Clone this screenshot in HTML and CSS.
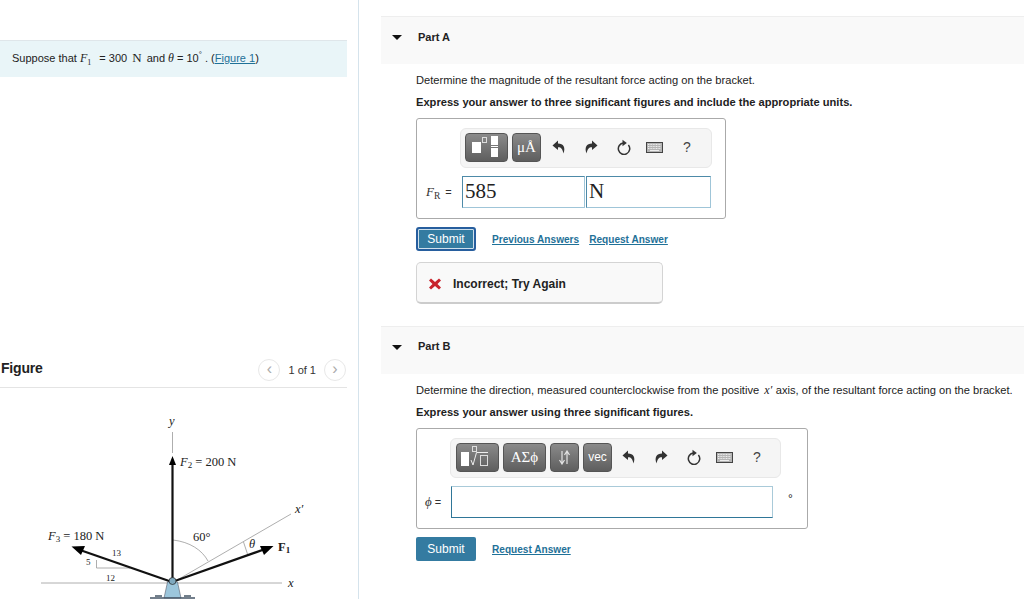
FILE: index.html
```html
<!DOCTYPE html>
<html lang="en">
<head>
<meta charset="utf-8">
<title>Part A and Part B</title>
<link rel="stylesheet" href="styles.css">
</head>
<body>
<svg class="defs" width="0" height="0" aria-hidden="true">
  <defs>
    <symbol id="undo" viewBox="0 0 14 14"><path d="M6 0.500 0.500 5.500 6 10V7.200C8.800 7 10.500 8.700 11.500 13.500 13.800 7.500 11.500 3.600 6 3.500z"/></symbol>
    <symbol id="redo" viewBox="0 0 14 14"><path d="M8 0.500 13.500 5.500 8 10V7.200C5.200 7 3.500 8.700 2.500 13.500 0.200 7.500 2.500 3.600 8 3.500z"/></symbol>
    <symbol id="reload" viewBox="0 0 16 16"><path d="M12.400 6A5.700 5.700 0 1 1 7.500 4" fill="none" stroke="currentColor" stroke-width="1.500"/><path d="M6.500 0.800 10.800 4 6.500 7.200z"/></symbol>
    <symbol id="kbd" viewBox="0 0 17 11"><rect x="0.500" y="0.500" width="16" height="10" fill="#b5b5b5" stroke="#444"/><path d="M2 2.500h13M2 4.500h13M2 6.500h13" stroke="#eee" stroke-dasharray="1 .6"/><path d="M4 8.500h9" stroke="#eee"/></symbol>
  </defs>
</svg>
<div class="page">
  <aside class="left">
    <div class="intro">Suppose that <i class="m">F</i><sub class="m">1</sub> <span class="eq">= 300</span> <span class="m unit">N</span> and <i class="m">θ</i> = 10<sup>°</sup> . (<a href="#">Figure 1</a>)</div>
    <div class="fig-head">
      <h2>Figure</h2>
      <div class="pager">
        <span class="round">‹</span>
        <span>1 of 1</span>
        <span class="round">›</span>
      </div>
    </div>
    <svg class="diagram" width="347" height="211" viewBox="0 388 347 211" role="img" aria-label="Forces on a bracket">
      <g class="thin">
        <path d="M172.500 432V453"/>
        <path d="M41 583H282"/>
        <path d="M172 583 291 514"/>
        <path d="M96.500 560V568H130"/>
        <path d="M173 540C190 542 202 550 208 561"/>
        <path d="M243.500 542 247.500 554"/>
      </g>
      <g class="thick">
        <path d="M172.500 581V462"/>
        <path d="M172 582 268 548"/>
        <path d="M172 582 80 550"/>
      </g>
      <path d="M172.500 456l-3.500 9h7z"/>
      <path d="M273.500 546 260 546 264 555z"/>
      <path d="M71.500 546.500 85 546 81 555z"/>
      <path class="base" d="M164 598 167.500 582H177.500L181 598z"/>
      <path class="plate" d="M150 598H195"/>
      <path class="plate" d="M155 596h7M184 596h7"/>
      <circle class="pin" cx="172.500" cy="581" r="3.500"/>
      <text class="t i" x="169" y="425">y</text>
      <text class="t" x="180" y="466"><tspan class="i">F</tspan><tspan class="s" dy="2">2</tspan><tspan dy="-2"> = 200 N</tspan></text>
      <text class="t" x="48" y="540"><tspan class="i">F</tspan><tspan class="s" dy="2">3</tspan><tspan dy="-2"> = 180 N</tspan></text>
      <text class="t" x="193" y="541">60°</text>
      <text class="t i" x="249" y="548">θ</text>
      <text class="t i" x="295" y="513">x′</text>
      <text class="t i" x="288" y="587">x</text>
      <text class="t b" x="278" y="551">F<tspan class="s" dy="2">1</tspan></text>
      <text class="t s" x="112" y="556">13</text>
      <text class="t s" x="86" y="565">5</text>
      <text class="t s" x="106" y="581">12</text>
    </svg>
  </aside>
  <main class="right">
    <section class="part first">
      <header class="part-head"><span class="caret"></span><h3>Part A</h3></header>
      <div class="part-body">
        <p class="q">Determine the magnitude of the resultant force acting on the bracket.</p>
        <p class="q b">Express your answer to three significant figures and include the appropriate units.</p>
        <div class="answer a-box">
          <div class="toolbar tb-a">
            <span class="btn b-frac">
              <svg width="33" height="22" viewBox="0 0 33 22"><rect x="2" y="6" width="9" height="11" fill="#fff"/><rect x="12.500" y="1.500" width="4" height="5" fill="none" stroke="#ddd"/><rect x="21" y="0" width="7" height="9" fill="#fff"/><path d="M21 10.500h7" stroke="#fff"/><rect x="21" y="12" width="7" height="9" fill="#fff"/></svg>
            </span>
            <span class="btn b-mu">μÅ</span>
            <span class="tools">
              <svg class="ic ic-undo"><use href="#undo"/></svg>
              <svg class="ic ic-redo"><use href="#redo"/></svg>
              <svg class="ic ic-reload"><use href="#reload"/></svg>
              <svg class="ic ic-kbd"><use href="#kbd"/></svg>
              <span class="help">?</span>
            </span>
          </div>
          <div class="row">
            <span class="lab"><i class="m">F</i><sub class="m">R</sub> =</span>
            <span class="inp inp-val">585</span>
            <span class="inp inp-unit">N</span>
          </div>
        </div>
        <div class="actions">
          <button class="submit focus" type="button">Submit</button>
          <a class="act" href="#">Previous Answers</a>
          <a class="act" href="#">Request Answer</a>
        </div>
        <div class="feedback">
          <svg width="12" height="12" viewBox="0 0 12 12"><path d="M2 0.500 6 4 10 0.500 12 2.500 8.500 6 12 9.500 10 11.500 6 8 2 11.500 0 9.500 3.500 6 0 2.500z"/></svg>
          <span>Incorrect; Try Again</span>
        </div>
      </div>
    </section>
    <section class="part">
      <header class="part-head"><span class="caret"></span><h3>Part B</h3></header>
      <div class="part-body">
        <p class="q">Determine the direction, measured counterclockwise from the positive <i class="m">x</i>′ axis, of the resultant force acting on the bracket.</p>
        <p class="q b">Express your answer using three significant figures.</p>
        <div class="answer b-box">
          <div class="toolbar tb-b">
            <span class="btn b-root">
              <svg width="33" height="22" viewBox="0 0 33 22"><rect x="0" y="6" width="8" height="14" fill="#fff"/><rect x="11.500" y="0.500" width="4" height="5" fill="none" stroke="#ddd"/><path d="M10 14l2 5 3.500-12.500H27" fill="none" stroke="#eee"/><rect x="19.500" y="9.500" width="7" height="10" fill="none" stroke="#ddd"/></svg>
            </span>
            <span class="btn b-greek">ΑΣϕ</span>
            <span class="btn b-arrows">
              <svg width="13" height="15" viewBox="0 0 13 15"><path d="M4 1v12M1.500 10 4 14 6.500 10M9 14V2M6.500 5 9 1 11.500 5" fill="none" stroke="#e4e4e4" stroke-width="1.200"/></svg>
            </span>
            <span class="btn b-vec">vec</span>
            <span class="tools tools-b">
              <svg class="ic ic-undo"><use href="#undo"/></svg>
              <svg class="ic ic-redo"><use href="#redo"/></svg>
              <svg class="ic ic-reload"><use href="#reload"/></svg>
              <svg class="ic ic-kbd"><use href="#kbd"/></svg>
              <span class="help">?</span>
            </span>
          </div>
          <div class="row row-b">
            <span class="lab lab-b"><i class="m">ϕ</i> =</span>
            <span class="inp inp-phi"></span>
            <span class="deg">°</span>
          </div>
        </div>
        <div class="actions">
          <button class="submit" type="button">Submit</button>
          <a class="act" href="#">Request Answer</a>
        </div>
      </div>
    </section>
  </main>
</div>
</body>
</html>
```
FILE: styles.css
```css
* { box-sizing: border-box; }
html, body { margin: 0; height: 599px; overflow: hidden; background: #fff; }
body { font-family: "Liberation Sans", Arial, sans-serif; font-size: 11px; color: #222; }
.defs { position: absolute; }
a { color: #1f7198; }
.page { display: flex; height: 599px; }

.left { width: 359px; flex: none; padding-top: 40px; border-right: 1px solid #d5e3ec; }
.intro { width: 347px; height: 37px; padding: 9px 0 0 12px; background: #e9f5f8; border-top: 1px solid #dfe6ea; line-height: 15px; }
.intro sub { font-size: 8px; line-height: 0; }
.intro sup { font-size: 8px; line-height: 0; }
.m { font-family: "Liberation Serif", serif; }
i.m { font-size: 12px; }
.unit { font-size: 13px; margin: 0 2px; }
.eq { margin-left: 5px; }
.fig-head { width: 347px; height: 33px; margin-top: 278px; padding-left: 1px; display: flex; justify-content: space-between; align-items: center; border-bottom: 1px solid #e4e4e4; }
.fig-head h2 { margin: 0 0 6px; font-size: 14px; line-height: 16px; font-weight: bold; color: #222; letter-spacing: -0.2px; }
.pager { display: flex; align-items: center; gap: 8px; margin: 0 1px 2px 0; color: #333; }
.round { width: 22px; height: 22px; border: 1px solid #e8e8e8; border-radius: 50%; color: #aaa; font-size: 16px; line-height: 18px; text-align: center; }
.diagram { display: block; }
.thin path { fill: none; stroke: #999; stroke-width: 0.800; }
.thick path { fill: none; stroke: #111; stroke-width: 2.200; }
.base { fill: #9cc6dc; stroke: #445; stroke-width: 0.500; }
.plate { fill: none; stroke: #456; stroke-width: 1.500; }
.pin { fill: #7fa9bf; stroke: #222; stroke-width: 0.700; }
.t { font-family: "Liberation Serif", serif; font-size: 12.500px; fill: #222; }
.t.i, .t .i { font-style: italic; }
.t.b { font-weight: bold; }
.t.s, .t .s { font-size: 9px; }

.right { flex: 1; padding: 16px 0 0 22px; min-width: 0; }
.part-head { height: 48px; display: flex; align-items: center; background: #f9f9f9; border-top: 1px solid #eee; padding: 0 0 9px 11px; }
.first .part-head { padding-bottom: 8px; }
.part-head h3 { margin: 0 0 0 16px; font-size: 11px; font-weight: bold; color: #222; }
.caret { width: 0; height: 0; border: solid transparent; border-width: 5px 5px 0; border-top-color: #111; margin-top: 2px; }
.part + .part { margin-top: 22px; }
.part-body { padding-left: 35px; font-size: 11.130px; }
.q { margin: 0; line-height: 14px; white-space: nowrap; padding-top: 9px; }
.q i.m { margin: 0 1px 0 2px; }
.q.b { font-weight: bold; padding-top: 8px; }

.answer { margin-top: 9px; height: 101px; border: 1px solid #aaa; border-radius: 3px; position: relative; }
.a-box { width: 310px; padding: 9px 0 0 43px; }
.b-box { width: 392px; padding: 9px 0 0 33px; }
.toolbar { height: 40px; background: #f5f5f5; border: 1px solid #e8e8e8; border-radius: 6px; display: flex; align-items: center; gap: 4px; padding: 0 0 2px 4px; }
.tb-a { width: 252px; }
.tb-b { width: 331px; padding-left: 5px; }
.btn { height: 29px; border-radius: 4px; border: 1px solid #555; background: linear-gradient(#8a8a8a, #5e5e5e); color: #fff; display: flex; align-items: center; justify-content: center; flex: none; }
.b-frac { width: 43px; }
.b-mu { width: 29px; font-family: "Liberation Serif", serif; font-size: 15px; }
.b-root { width: 43px; }
.b-greek { width: 43px; font-family: "Liberation Serif", serif; font-size: 15px; }
.b-arrows { width: 29px; }
.b-vec { width: 29px; font-size: 12px; }
.tools { flex: 1; display: flex; align-items: center; padding-left: 7px; color: #333; fill: #333; }
.tools-b { padding-left: 6px; }
.ic { flex: none; }
.ic-undo, .ic-redo { width: 14px; height: 14px; margin-right: 18px; }
.ic-reload { width: 16px; height: 16px; margin-right: 14px; }
.ic-kbd { width: 17px; height: 11px; margin-right: 20px; }
.help { font-size: 14px; color: #444; }

.row { display: flex; align-items: stretch; height: 32px; margin: 8px 0 0 -34px; }
.row-b { margin: 8px 0 0 -25px; }
.lab { width: 36px; line-height: 32px; color: #333; font-size: 11px; white-space: nowrap; }
.lab i.m { font-size: 13px; }
.lab sub { font-size: 9.500px; line-height: 0; margin-right: 2px; }
.lab-b { width: 26px; }
.inp { display: block; border: 1px solid #4d8aa8; border-right-color: #9fc5d8; border-bottom-color: #9fc5d8; font-family: "Liberation Serif", serif; font-size: 21px; line-height: 29px; padding-left: 2px; color: #222; flex: none; }
.inp-val { width: 123px; }
.inp-unit { width: 125px; margin-left: 1px; }
.inp-phi { width: 322px; border-color: #a9cad9; border-left-color: #2f7698; border-bottom-color: #2f7698; }
.deg { margin-left: 15px; line-height: 26px; font-size: 12px; }

.actions { display: flex; align-items: center; gap: 16px; margin-top: 8px; height: 24px; }
.submit { width: 60px; height: 24px; padding: 0; background: #347ba1; color: #fff; border: 0; border-radius: 2px; font: 12px "Liberation Sans", Arial, sans-serif; }
.submit.focus { border: 2px solid #275e9e; box-shadow: inset 0 0 0 1px #cfe0ec; border-radius: 3px; }
.act { font-weight: bold; font-size: 10.100px; color: #1f7198; }
.actions .act + .act { margin-left: -6px; }
.feedback { margin-top: 11px; width: 247px; height: 42px; display: flex; align-items: center; gap: 12px; padding: 2px 0 0 12px; background: #f9f9f9; border: 1px solid #d4d4d4; border-bottom: 2px solid #ccc; border-radius: 5px; font-size: 12px; font-weight: bold; color: #222; }
.feedback svg { fill: #c8232c; flex: none; }
```
